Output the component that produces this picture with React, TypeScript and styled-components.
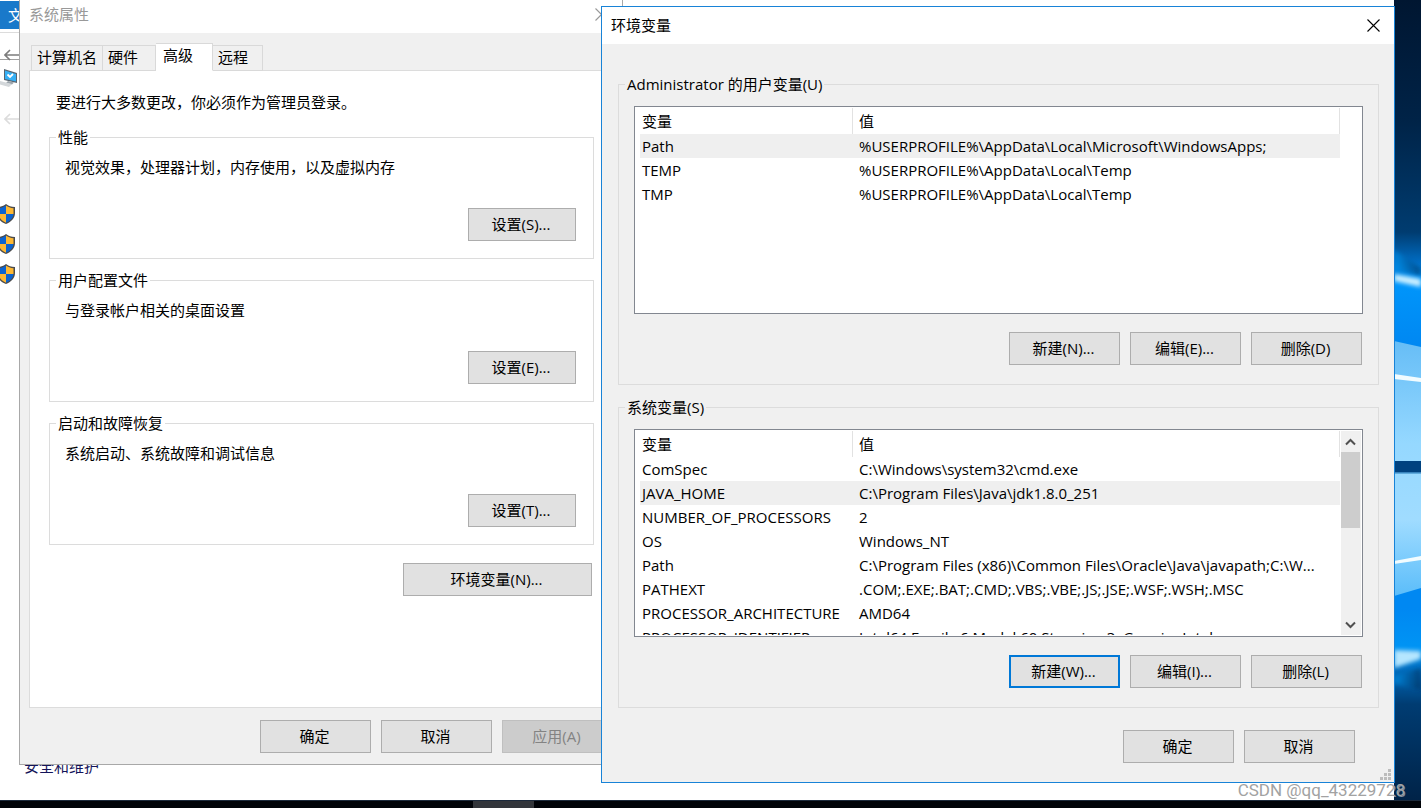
import React from 'react';
import styled, { createGlobalStyle, css } from 'styled-components';

const GlobalStyle = createGlobalStyle`
  * { box-sizing: border-box; }
  body {
    margin: 0;
    overflow: hidden;
    background: #000;
    color: #000;
    font-family: "Open Sans", "Noto Sans CJK SC", sans-serif;
    font-size: 15px;
    font-kerning: none;
    line-height: 20px;
  }
  button, legend, table { font: inherit; font-kerning: inherit; color: inherit; }
`;

/* ---------- desktop ---------- */

const Desktop = styled.main`
  position: relative;
  display: grid;
  grid-template-columns: 1fr 27px;
  grid-template-rows: 1fr 8px;
  min-height: 100vh;
  overflow: hidden;
`;

const Wallpaper = styled.svg`
  display: block;
  width: 100%;
  height: 100%;
  min-height: 0;
`;

const Taskbar = styled.footer`
  grid-column: 1 / -1;
  display: flex;
  padding-left: 473px;
  background: #000308;
  border-top: 1px solid #1c2a3c;
`;

const TaskItem = styled.span`
  width: 61px;
  background: #33363b;
`;

const Watermark = styled.div`
  position: absolute;
  right: 16px;
  bottom: 8px;
  font-family: Roboto, sans-serif;
  font-size: 17px;
  color: #a2a2a2;
  text-shadow: 1px 1px 0 rgba(255, 255, 255, 0.5);
`;

/* ---------- control panel window behind the dialogs ---------- */

const Explorer = styled.section`
  display: flex;
  flex-direction: column;
  align-items: flex-start;
  background: #fff;
  padding-top: 1px;
`;

const FileTab = styled.button`
  height: 28px;
  padding: 0 8px;
  border: 0;
  background: #1979ca;
  color: #fff;
`;

const ToolbarStrip = styled.div`
  width: 100%;
  height: 28px;
  margin-top: 3px;
  padding: 16px 0 0;
  border-top: 1px solid #dcdcdc;
  border-bottom: 1px solid #a0a0a0;
`;

const AddressStrip = styled.div`
  display: flex;
  flex-direction: column;
  gap: 24px;
  padding-top: 9px;
`;

const ArrowSlot = styled.div`
  height: 12px;
  padding-left: 4px;
  line-height: 0;
`;

const ShieldList = styled.div`
  display: flex;
  flex-direction: column;
  gap: 10px;
  flex: 1;
  margin: 79px 0 0 -3px;
`;

const SecurityLink = styled.a`
  margin: 0 0 24px 24px;
  color: #14145a;
  text-decoration: none;
`;

/* ---------- dialog parts ---------- */

const Dialog = styled.section<{ $active?: boolean }>`
  position: absolute;
  background: #f0f0f0;
  border: 1px solid ${p => (p.$active ? '#1883d7' : '#a8a8a8')};
`;

const SystemDialog = styled(Dialog)`
  left: 19px;
  top: -5px;
  width: 604px;
`;

const EnvironmentDialog = styled(Dialog)`
  left: 601px;
  right: 26px;
  top: 6px;
`;

const TitleBar = styled.header<{ $muted?: boolean }>`
  display: flex;
  align-items: center;
  justify-content: space-between;
  height: 37px;
  padding: 0 14px 0 9px;
  background: #fff;
  color: ${p => (p.$muted ? '#999' : '#000')};
`;

const Title = styled.h1`
  margin: 0;
  padding-bottom: 2px;
  font-size: 15px;
  font-weight: 400;
`;

const CloseButton = styled.button`
  display: flex;
  padding: 0;
  border: 0;
  background: none;
`;

const PushButton = styled.button<{ $width?: number; $default?: boolean }>`
  width: ${p => p.$width ?? 111}px;
  height: 33px;
  padding: 0 2px 2px 0;
  border: ${p => (p.$default ? '2px solid #0078d7' : '1px solid #adadad')};
  background: #e1e1e1;
  white-space: nowrap;
  &:disabled {
    background: #ccc;
    border-color: #bfbfbf;
    color: #838383;
  }
`;

const ButtonRow = styled.div`
  display: flex;
  justify-content: flex-end;
  gap: 10px;
`;

const Group = styled.fieldset`
  min-width: 0;
  margin: 0;
  border: 1px solid #dcdcdc;
`;

const Legend = styled.legend`
  padding: 0 2px;
`;

/* ---------- system properties ---------- */

const SystemBody = styled.div`
  padding: 10px 9px 11px;
`;

const TabList = styled.div`
  display: flex;
  align-items: flex-end;
  height: 28px;
  margin: 0 0 -1px 2px;
`;

const Tab = styled.button<{ $width: number; $selected?: boolean }>`
  width: ${p => p.$width}px;
  height: 26px;
  padding: 0 0 2px 5px;
  border: 1px solid #d9d9d9;
  border-left-width: 0;
  background: #f0f0f0;
  text-align: left;
  white-space: nowrap;
  &:first-child { border-left-width: 1px; }
  ${p => p.$selected && css`
    position: relative;
    height: 28px;
    padding: 0 0 4px 7px;
    background: #fff;
    border-bottom-color: #fff;
  `}
`;

const TabPage = styled.div`
  display: flex;
  flex-direction: column;
  min-height: 638px;
  padding: 21px 18px 21px 19px;
  border: 1px solid #dcdcdc;
  background: #fff;
`;

const Notice = styled.p`
  margin: 0 0 15px 7px;
`;

const SettingGroups = styled.div`
  display: flex;
  flex-direction: column;
  gap: 11px;
  margin-bottom: 18px;
`;

const SettingGroup = styled(Group)`
  padding: 10px 17px 17px 6px;
`;

const SettingText = styled.p`
  margin: 0 0 31px 9px;
`;

const EnvironmentRow = styled(ButtonRow)`
  padding-right: 2px;
`;

const SystemButtons = styled(ButtonRow)`
  margin-top: 12px;
`;

/* ---------- environment variables ---------- */

const EnvironmentBody = styled.div`
  display: flex;
  flex-direction: column;
  gap: 12px;
  padding: 30px 15px 19px 16px;
`;

const VariableGroup = styled(Group)`
  padding: 12px 15px 19px 6px;
`;

const VariableButtons = styled(ButtonRow)`
  padding-right: 1px;
`;

const ListBox = styled.div`
  display: flex;
  height: 208px;
  margin: 0 0 18px 9px;
  padding: 1px 1px 1px 5px;
  border: 1px solid #828790;
  background: #fff;
  overflow: hidden;
`;

const TableArea = styled.div`
  flex: 1;
  min-width: 0;
  overflow: hidden;
`;

const VariableTable = styled.table`
  width: 100%;
  table-layout: fixed;
  border-collapse: separate;
  border-spacing: 0;
`;

const HeaderCell = styled.th<{ $name?: boolean }>`
  width: ${p => (p.$name ? '213px' : 'auto')};
  height: 26px;
  padding: 0 0 0 ${p => (p.$name ? 2 : 6)}px;
  border-right: 1px solid #e2e2e2;
  font-weight: 400;
  text-align: left;
`;

const Row = styled.tr<{ $selected?: boolean }>`
  background: ${p => (p.$selected ? '#efefef' : '#fff')};
`;

const Cell = styled.td`
  height: 24px;
  padding: 0 0 0 2px;
  white-space: nowrap;
  & + & { padding-left: 6px; }
`;

const ScrollGutter = styled.div<{ $visible?: boolean }>`
  display: flex;
  flex-direction: column;
  width: 20px;
  margin-left: 1px;
  background: ${p => (p.$visible ? '#f0f0f0' : 'transparent')};
`;

const ScrollArrow = styled.button`
  display: flex;
  align-items: center;
  justify-content: center;
  height: 21px;
  padding: 0 1px 0 0;
  border: 0;
  background: none;
`;

const ScrollTrack = styled.div`
  flex: 1;
`;

const ScrollThumb = styled.div`
  width: 19px;
  height: 76px;
  background: #cdcdcd;
`;

const DialogButtons = styled(ButtonRow)`
  margin: 10px 24px 0 0;
`;

const ResizeGrip = styled.svg`
  position: absolute;
  right: 3px;
  bottom: 2px;
`;

/* ---------- drawings ---------- */

const Cross = ({ color }: { color: string }) => (
  <svg width="13" height="13" viewBox="0 0 13 13" aria-hidden="true">
    <path d="M0.5 0.5 12.5 12.5M12.5 0.5 0.5 12.5" stroke={color} strokeWidth="1.1" fill="none" />
  </svg>
);

const BackArrow = ({ color }: { color: string }) => (
  <svg width="18" height="12" viewBox="0 0 18 12" aria-hidden="true">
    <path d="M6 1 1 6 6 11M1 6H18" stroke={color} strokeWidth="1.6" fill="none" />
  </svg>
);

const Computer = () => (
  <svg width="18" height="20" viewBox="0 0 18 20" aria-hidden="true">
    <path d="M4 0 17 4V14L4 11Z" fill="#5a6570" />
    <path d="M5 1.500 16 5V12.500L5 10Z" fill="#36b0f5" />
    <path d="M7.500 5.500 10 8 13 5" stroke="#fff" strokeWidth="1.800" fill="none" />
    <path d="M8 12 14 13.500 12 15.500 6 14Z" fill="#9aa3aa" />
    <path d="M0 12 12 15 9 18 0 15.500Z" fill="#d3d7da" />
  </svg>
);

const Shield = () => (
  <svg width="18" height="20" viewBox="0 0 18 20" aria-hidden="true">
    <path d="M9 0C6.500 1.900 4 2.800 0 3V9c0 5.500 4 9 9 11C14 18 18 14.500 18 9V3C14 2.800 11.500 1.900 9 0Z" fill="#4b4b4b" />
    <path d="M9 1.500C7 3 4.600 4 1.500 4.300V10H9Z" fill="#0a63d0" />
    <path d="M9 1.500C11 3 13.400 4 16.500 4.300V10H9Z" fill="#fdb833" />
    <path d="M1.500 10C2 14.200 5 17 9 18.700V10Z" fill="#fdb833" />
    <path d="M16.500 10C16 14.200 13 17 9 18.700V10Z" fill="#0a63d0" />
  </svg>
);

const Chevron = ({ down }: { down?: boolean }) => (
  <svg width="11" height="8" viewBox="0 0 11 8" aria-hidden="true">
    <path d={down ? 'M1 1.500 5.500 6 10 1.500' : 'M1 6.500 5.500 2 10 6.500'} stroke="#505050" strokeWidth="2" fill="none" />
  </svg>
);

const WallpaperArt = () => (
  <Wallpaper viewBox="0 0 27 800" preserveAspectRatio="none" aria-hidden="true">
    <defs>
      <linearGradient id="sky" x1="0" y1="0" x2="0" y2="1">
        <stop offset="0" stopColor="#001631" />
        <stop offset=".15" stopColor="#002347" />
        <stop offset=".29" stopColor="#003c70" />
        <stop offset=".325" stopColor="#0069bd" />
        <stop offset=".35" stopColor="#0096fb" />
        <stop offset=".43" stopColor="#0088f2" />
        <stop offset=".76" stopColor="#0088f2" />
        <stop offset=".81" stopColor="#0094f4" />
        <stop offset=".84" stopColor="#0068b8" />
        <stop offset=".88" stopColor="#003c72" />
        <stop offset="1" stopColor="#002348" />
      </linearGradient>
      <linearGradient id="pane" x1="0" y1="0" x2="0" y2="1">
        <stop offset="0" stopColor="#66bdf6" />
        <stop offset=".4" stopColor="#95d8ff" />
        <stop offset=".7" stopColor="#a0dcff" />
        <stop offset="1" stopColor="#5bbdfa" />
      </linearGradient>
      <linearGradient id="shade" x1="0" y1="0" x2="1" y2="0">
        <stop offset="0" stopColor="#00a2ff" stopOpacity=".55" />
        <stop offset="1" stopColor="#00224c" stopOpacity=".55" />
      </linearGradient>
      <filter id="soft" x="-50%" y="-50%" width="200%" height="200%">
        <feGaussianBlur stdDeviation="2" />
      </filter>
    </defs>
    <rect width="27" height="800" fill="url(#sky)" />
    <path d="M0 250 27 268V276L0 270Z" fill="url(#shade)" filter="url(#soft)" />
    <path d="M0 274 27 279V287L0 281Z" fill="#cdf0ff" filter="url(#soft)" />
    <path d="M0 341 27 347V588L0 596Z" fill="url(#pane)" />
    <path d="M0 374 27 378V382L0 379Z" fill="#f2fcff" />
    <path d="M0 461H27V473H0Z" fill="#00427f" />
    <path d="M0 473H27" stroke="#4b9bd2" strokeWidth="1.500" />
    <path d="M0 561 27 556V560L0 564Z" fill="#f2fcff" />
    <path d="M0 650 27 651V659L0 668Z" fill="#b5e6ff" filter="url(#soft)" />
    <path d="M0 676 27 668V690L0 684Z" fill="url(#shade)" filter="url(#soft)" />
  </Wallpaper>
);

/* ---------- data ---------- */

type Variable = { name: string; value: string };

const userVariables: Variable[] = [
  { name: 'Path', value: '%USERPROFILE%\\AppData\\Local\\Microsoft\\WindowsApps;' },
  { name: 'TEMP', value: '%USERPROFILE%\\AppData\\Local\\Temp' },
  { name: 'TMP', value: '%USERPROFILE%\\AppData\\Local\\Temp' },
];

const systemVariables: Variable[] = [
  { name: 'ComSpec', value: 'C:\\Windows\\system32\\cmd.exe' },
  { name: 'JAVA_HOME', value: 'C:\\Program Files\\Java\\jdk1.8.0_251' },
  { name: 'NUMBER_OF_PROCESSORS', value: '2' },
  { name: 'OS', value: 'Windows_NT' },
  { name: 'Path', value: 'C:\\Program Files (x86)\\Common Files\\Oracle\\Java\\javapath;C:\\W...' },
  { name: 'PATHEXT', value: '.COM;.EXE;.BAT;.CMD;.VBS;.VBE;.JS;.JSE;.WSF;.WSH;.MSC' },
  { name: 'PROCESSOR_ARCHITECTURE', value: 'AMD64' },
  { name: 'PROCESSOR_IDENTIFIER', value: 'Intel64 Family 6 Model 60 Stepping 3, GenuineIntel' },
];

const settings = [
  { title: '性能', text: '视觉效果，处理器计划，内存使用，以及虚拟内存', action: '设置(S)...' },
  { title: '用户配置文件', text: '与登录帐户相关的桌面设置', action: '设置(E)...' },
  { title: '启动和故障恢复', text: '系统启动、系统故障和调试信息', action: '设置(T)...' },
];

const tabs = [
  { label: '计算机名', width: 72 },
  { label: '硬件', width: 53 },
  { label: '高级', width: 57, selected: true },
  { label: '远程', width: 50 },
];

const VariableList = ({ items, selected, scroll }: { items: Variable[]; selected: string; scroll?: boolean }) => (
  <ListBox>
    <TableArea>
      <VariableTable>
        <thead>
          <tr>
            <HeaderCell $name scope="col">变量</HeaderCell>
            <HeaderCell scope="col">值</HeaderCell>
          </tr>
        </thead>
        <tbody>
          {items.map(v => (
            <Row key={v.name} $selected={v.name === selected}>
              <Cell>{v.name}</Cell>
              <Cell>{v.value}</Cell>
            </Row>
          ))}
        </tbody>
      </VariableTable>
    </TableArea>
    <ScrollGutter $visible={scroll}>
      {scroll && (
        <>
          <ScrollArrow aria-label="向上滚动"><Chevron /></ScrollArrow>
          <ScrollTrack><ScrollThumb /></ScrollTrack>
          <ScrollArrow aria-label="向下滚动"><Chevron down /></ScrollArrow>
        </>
      )}
    </ScrollGutter>
  </ListBox>
);

export default function App() {
  return (
    <>
      <GlobalStyle />
      <Desktop>
        <Explorer>
          <FileTab>文</FileTab>
          <ToolbarStrip>
            <ArrowSlot><BackArrow color="#7c7c7c" /></ArrowSlot>
          </ToolbarStrip>
          <AddressStrip>
            <Computer />
            <ArrowSlot><BackArrow color="#dcdcdc" /></ArrowSlot>
          </AddressStrip>
          <ShieldList>
            <Shield />
            <Shield />
            <Shield />
          </ShieldList>
          <SecurityLink href="#security">安全和维护</SecurityLink>
        </Explorer>
        <WallpaperArt />
        <Taskbar><TaskItem /></Taskbar>

        <SystemDialog role="dialog" aria-label="系统属性">
          <TitleBar $muted>
            <Title>系统属性</Title>
            <CloseButton aria-label="关闭"><Cross color="#999" /></CloseButton>
          </TitleBar>
          <SystemBody>
            <TabList role="tablist">
              {tabs.map(t => (
                <Tab key={t.label} role="tab" aria-selected={!!t.selected} $width={t.width} $selected={t.selected}>
                  {t.label}
                </Tab>
              ))}
            </TabList>
            <TabPage role="tabpanel">
              <Notice>要进行大多数更改，你必须作为管理员登录。</Notice>
              <SettingGroups>
                {settings.map(s => (
                  <SettingGroup key={s.title}>
                    <Legend>{s.title}</Legend>
                    <SettingText>{s.text}</SettingText>
                    <ButtonRow><PushButton $width={108}>{s.action}</PushButton></ButtonRow>
                  </SettingGroup>
                ))}
              </SettingGroups>
              <EnvironmentRow><PushButton $width={189}>环境变量(N)...</PushButton></EnvironmentRow>
            </TabPage>
            <SystemButtons>
              <PushButton>确定</PushButton>
              <PushButton>取消</PushButton>
              <PushButton disabled>应用(A)</PushButton>
            </SystemButtons>
          </SystemBody>
        </SystemDialog>

        <EnvironmentDialog $active role="dialog" aria-label="环境变量">
          <TitleBar>
            <Title>环境变量</Title>
            <CloseButton aria-label="关闭"><Cross color="#000" /></CloseButton>
          </TitleBar>
          <EnvironmentBody>
            <VariableGroup>
              <Legend>Administrator 的用户变量(U)</Legend>
              <VariableList items={userVariables} selected="Path" />
              <VariableButtons>
                <PushButton>新建(N)...</PushButton>
                <PushButton>编辑(E)...</PushButton>
                <PushButton>删除(D)</PushButton>
              </VariableButtons>
            </VariableGroup>
            <VariableGroup>
              <Legend>系统变量(S)</Legend>
              <VariableList items={systemVariables} selected="JAVA_HOME" scroll />
              <VariableButtons>
                <PushButton $default>新建(W)...</PushButton>
                <PushButton>编辑(I)...</PushButton>
                <PushButton>删除(L)</PushButton>
              </VariableButtons>
            </VariableGroup>
            <DialogButtons>
              <PushButton>确定</PushButton>
              <PushButton>取消</PushButton>
            </DialogButtons>
          </EnvironmentBody>
          <ResizeGrip width="11" height="11" viewBox="0 0 11 11" aria-hidden="true">
            <path d="M8 0h3v3h-3zM4 4h3v3h-3zM8 4h3v3h-3zM0 8h3v3h-3zM4 8h3v3h-3zM8 8h3v3h-3z" fill="#bcbcbc" />
          </ResizeGrip>
        </EnvironmentDialog>

        <Watermark>CSDN @qq_43229728</Watermark>
      </Desktop>
    </>
  );
}
